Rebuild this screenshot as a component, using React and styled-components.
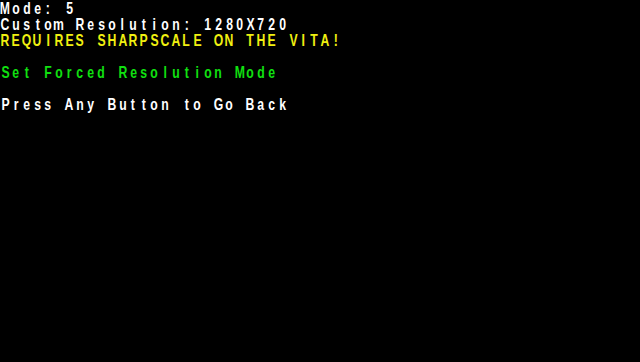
import React from 'react';
import styled, { createGlobalStyle } from 'styled-components';

const GlobalStyle = createGlobalStyle`
  html, body {
    margin: 0;
    padding: 0;
    background: #000;
  }
`;

const Screen = styled.div`
  width: 640px;
  height: 362px;
  background: #000;
  overflow: hidden;
  font-family: "Liberation Sans", Arial, sans-serif;
  font-weight: bold;
  font-size: 16.5px;
`;

const Line = styled.div`
  display: flex;
  height: 16px;
  line-height: 16px;
  color: ${(p) => p.$color || '#ffffff'};
  white-space: pre;
`;

// one fixed 60-column grid cell per character
const Cell = styled.span`
  display: flex;
  justify-content: center;
  width: 10.6667px;
  flex: none;
`;

const Glyph = styled.span`
  display: inline-block;
  transform: scaleX(0.74);
`;

const colors = {
  white: '#ffffff',
  yellow: '#f0f010',
  green: '#10e010',
};

const lines = [
  { text: 'Mode: 5', color: colors.white },
  { text: 'Custom Resolution: 1280X720', color: colors.white },
  { text: 'REQUIRES SHARPSCALE ON THE VITA!', color: colors.yellow },
  { text: '', color: colors.white },
  { text: 'Set Forced Resolution Mode', color: colors.green },
  { text: '', color: colors.white },
  { text: 'Press Any Button to Go Back', color: colors.white },
];

function TextLine({ text, color }) {
  return (
    <Line $color={color}>
      {text.split('').map((ch, i) => (
        <Cell key={i}>
          <Glyph>{ch}</Glyph>
        </Cell>
      ))}
    </Line>
  );
}

export default function App() {
  return (
    <>
      <GlobalStyle />
      <Screen>
        {lines.map((l, i) => (
          <TextLine key={i} text={l.text} color={l.color} />
        ))}
      </Screen>
    </>
  );
}
